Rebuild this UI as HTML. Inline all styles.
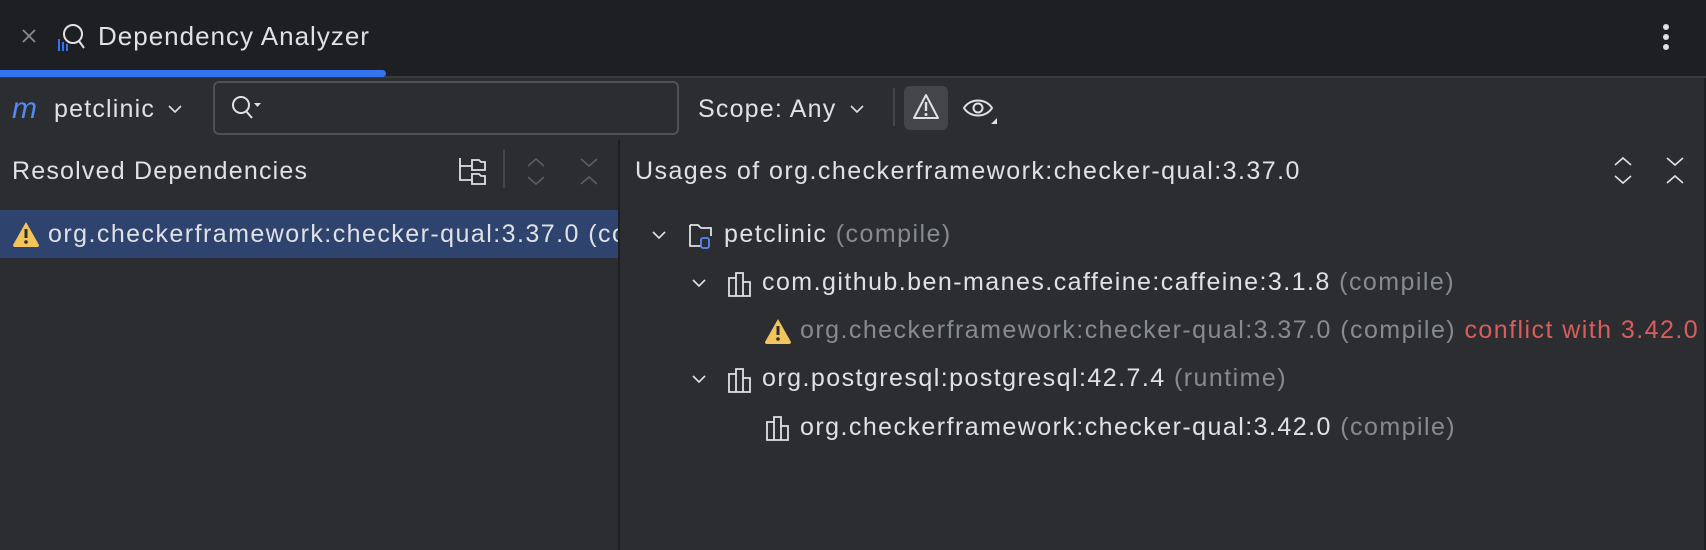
<!DOCTYPE html>
<html><head><meta charset="utf-8"><style>
*{margin:0;padding:0;box-sizing:border-box}
body{width:1706px;height:550px;background:#2b2d30;font-family:"Liberation Sans",sans-serif;color:#dfe1e5;position:relative;overflow:hidden;font-size:25px;letter-spacing:1.45px}
.a{position:absolute;white-space:nowrap}
.g{color:#868a91}
.r{color:#db5c5c}
svg{position:absolute;overflow:visible}
</style></head><body>
<div class="a" style="left:0;top:0;width:1706px;height:76px;background:#1e1f22"></div>
<div class="a" style="left:0;top:76px;width:1706px;height:2px;background:#393b40"></div>
<div class="a" style="left:0;top:70px;width:386px;height:7px;background:#3574f0;border-radius:0 4px 4px 0"></div>
<svg style="left:22px;top:29px" width="14" height="14"><path d="M1 1L13 13M13 1L1 13" stroke="#868a91" stroke-width="1.8"/></svg>
<svg style="left:56px;top:22px" width="30" height="30"><circle cx="17" cy="12" r="9" fill="none" stroke="#dfe1e5" stroke-width="2"/><path d="M23 19L28 26" stroke="#dfe1e5" stroke-width="2"/><path d="M3 17v12M7 20v9M11 22v7" stroke="#3574f0" stroke-width="2"/></svg>
<div class="a" style="left:98px;top:21px;font-size:26px;letter-spacing:1px">Dependency Analyzer</div>
<div class="a" style="left:1663px;top:24px;width:6px;height:6px;border-radius:3px;background:#dfe1e5"></div>
<div class="a" style="left:1663px;top:34px;width:6px;height:6px;border-radius:3px;background:#dfe1e5"></div>
<div class="a" style="left:1663px;top:44px;width:6px;height:6px;border-radius:3px;background:#dfe1e5"></div>

<div class="a" style="left:12px;top:92px;font-size:30px;font-style:italic;color:#548af7">m</div>
<div class="a" style="left:54px;top:95px;letter-spacing:1.2px">petclinic</div>
<svg style="left:168px;top:104px" width="14" height="10"><path d="M1 2L7 8L13 2" fill="none" stroke="#dfe1e5" stroke-width="1.6"/></svg>
<div class="a" style="left:213px;top:81px;width:466px;height:54px;border:2px solid #4e5157;border-radius:6px"></div>
<svg style="left:231px;top:95px" width="34" height="28"><circle cx="10" cy="10" r="8" fill="none" stroke="#dfe1e5" stroke-width="2"/><path d="M15 16L21 23" stroke="#dfe1e5" stroke-width="2"/><path d="M23 8h7l-3.5 4z" fill="#dfe1e5"/></svg>
<div class="a" style="left:698px;top:95px;letter-spacing:1.2px">Scope: Any</div>
<svg style="left:850px;top:104px" width="14" height="10"><path d="M1 2L7 8L13 2" fill="none" stroke="#dfe1e5" stroke-width="1.6"/></svg>
<div class="a" style="left:893px;top:88px;width:2px;height:38px;background:#43454a"></div>
<div class="a" style="left:904px;top:86px;width:44px;height:44px;background:#43454a;border-radius:6px"></div>
<svg style="left:912px;top:93px" width="28" height="28"><path d="M14 2L26 25H2Z" fill="none" stroke="#dfe1e5" stroke-width="2" stroke-linejoin="round"/><path d="M14 9v9" stroke="#dfe1e5" stroke-width="2.4"/><circle cx="14" cy="21.5" r="1.5" fill="#dfe1e5"/></svg>
<svg style="left:962px;top:96px" width="36" height="30"><path d="M2 12C8 2 24 2 30 12C24 22 8 22 2 12Z" fill="none" stroke="#dfe1e5" stroke-width="2"/><circle cx="16" cy="12" r="4.5" fill="none" stroke="#dfe1e5" stroke-width="2"/><path d="M35 22v6h-6z" fill="#dfe1e5"/></svg>

<div class="a" style="left:618px;top:140px;width:2px;height:410px;background:#1e1f22"></div>
<div class="a" style="left:1704px;top:78px;width:2px;height:472px;background:#1e1f22"></div>

<div class="a" style="left:12px;top:157px;letter-spacing:1.2px">Resolved Dependencies</div>
<svg style="left:458px;top:157px" width="30" height="30"><path d="M2 1v22h12M2 9h12" fill="none" stroke="#dfe1e5" stroke-width="1.8"/><path d="M14 3h7l2 2h4v8H14z M14 17h7l2 2h4v8H14z" fill="none" stroke="#dfe1e5" stroke-width="1.8"/></svg>
<div class="a" style="left:503px;top:150px;width:2px;height:38px;background:#43454a"></div>
<svg style="left:527px;top:158px" width="18" height="28"><path d="M1 8L9 1L17 8M1 19L9 26L17 19" fill="none" stroke="#5a5d63" stroke-width="1.6"/></svg>
<svg style="left:580px;top:158px" width="18" height="28"><path d="M1 1L9 8L17 1M1 26L9 19L17 26" fill="none" stroke="#5a5d63" stroke-width="1.6"/></svg>

<div class="a" style="left:0;top:210px;width:618px;height:48px;background:#2e436e"></div>
<svg style="left:12px;top:220px" width="28" height="28"><path d="M14 2L27 25Q27 27 25 27H3Q1 27 1 25Z" fill="#f2c55c"/><path d="M14 9v9" stroke="#2b2d30" stroke-width="3"/><circle cx="14" cy="22" r="1.8" fill="#2b2d30"/></svg>
<div class="a" style="left:48px;top:220px;width:570px;overflow:hidden">org.checkerframework:checker-qual:3.37.0 (compile)</div>

<div class="a" style="left:635px;top:157px">Usages of org.checkerframework:checker-qual:3.37.0</div>
<svg style="left:1614px;top:157px" width="18" height="28"><path d="M1 8L9 1L17 8M1 19L9 26L17 19" fill="none" stroke="#dfe1e5" stroke-width="1.6"/></svg>
<svg style="left:1666px;top:157px" width="18" height="28"><path d="M1 1L9 8L17 1M1 26L9 19L17 26" fill="none" stroke="#dfe1e5" stroke-width="1.6"/></svg>

<svg style="left:652px;top:230px" width="14" height="10"><path d="M1 2L7 8L13 2" fill="none" stroke="#dfe1e5" stroke-width="1.6"/></svg>
<svg style="left:688px;top:222px" width="30" height="30"><path d="M2 3h8l3 3h10v8 M2 3v21h11" fill="none" stroke="#dfe1e5" stroke-width="1.8"/><rect x="13" y="16" width="8" height="10" rx="2" fill="none" stroke="#548af7" stroke-width="1.8"/></svg>
<div class="a" style="left:724px;top:220px">petclinic <span class="g">(compile)</span></div>

<svg style="left:692px;top:278px" width="14" height="10"><path d="M1 2L7 8L13 2" fill="none" stroke="#dfe1e5" stroke-width="1.6"/></svg>
<svg style="left:728px;top:271px" width="26" height="26"><path d="M1 7h7v18H1z M8 2h7v23H8z M15 11h7v14h-7" fill="none" stroke="#dfe1e5" stroke-width="1.8"/></svg>
<div class="a" style="left:762px;top:268px">com.github.ben-manes.caffeine:caffeine:3.1.8 <span class="g">(compile)</span></div>

<svg style="left:764px;top:317px" width="28" height="28"><path d="M14 2L27 25Q27 27 25 27H3Q1 27 1 25Z" fill="#f2c55c"/><path d="M14 9v9" stroke="#2b2d30" stroke-width="3"/><circle cx="14" cy="22" r="1.8" fill="#2b2d30"/></svg>
<div class="a g" style="left:800px;top:316px">org.checkerframework:checker-qual:3.37.0 (compile) <span class="r">conflict with 3.42.0</span></div>

<svg style="left:692px;top:374px" width="14" height="10"><path d="M1 2L7 8L13 2" fill="none" stroke="#dfe1e5" stroke-width="1.6"/></svg>
<svg style="left:728px;top:367px" width="26" height="26"><path d="M1 7h7v18H1z M8 2h7v23H8z M15 11h7v14h-7" fill="none" stroke="#dfe1e5" stroke-width="1.8"/></svg>
<div class="a" style="left:762px;top:364px">org.postgresql:postgresql:42.7.4 <span class="g">(runtime)</span></div>

<svg style="left:766px;top:415px" width="26" height="26"><path d="M1 7h7v18H1z M8 2h7v23H8z M15 11h7v14h-7" fill="none" stroke="#dfe1e5" stroke-width="1.8"/></svg>
<div class="a" style="left:800px;top:413px">org.checkerframework:checker-qual:3.42.0 <span class="g">(compile)</span></div>
</body></html>
